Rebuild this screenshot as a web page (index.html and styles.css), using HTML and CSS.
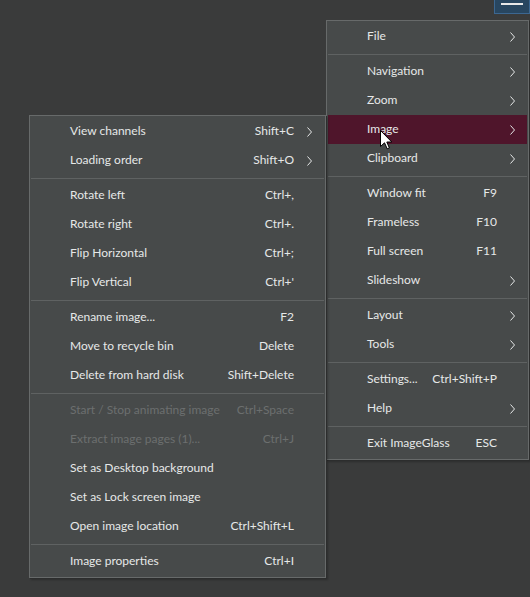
FILE: index.html
```html
<!DOCTYPE html>
<html lang="en">
<head>
<meta charset="utf-8">
<title>ImageGlass menu</title>
<link rel="stylesheet" href="styles.css">
</head>
<body>
<div class="toolbar">
  <button class="tool-btn" aria-label="Main menu"><span class="hamburger"></span></button>
</div>

<div class="menu menu-main">
  <div class="item"><span class="label">File</span><span class="key"></span><span class="arrow"><svg width="6" height="10" viewBox="0 0 6 10"><polyline points="0.5,0.5 4.5,5 0.5,9.5"/></svg></span></div>
  <div class="sep"></div>
  <div class="item"><span class="label">Navigation</span><span class="key"></span><span class="arrow"><svg width="6" height="10" viewBox="0 0 6 10"><polyline points="0.5,0.5 4.5,5 0.5,9.5"/></svg></span></div>
  <div class="item"><span class="label">Zoom</span><span class="key"></span><span class="arrow"><svg width="6" height="10" viewBox="0 0 6 10"><polyline points="0.5,0.5 4.5,5 0.5,9.5"/></svg></span></div>
  <div class="item active"><span class="label">Image</span><span class="key"></span><span class="arrow"><svg width="6" height="10" viewBox="0 0 6 10"><polyline points="0.5,0.5 4.5,5 0.5,9.5"/></svg></span></div>
  <div class="item"><span class="label">Clipboard</span><span class="key"></span><span class="arrow"><svg width="6" height="10" viewBox="0 0 6 10"><polyline points="0.5,0.5 4.5,5 0.5,9.5"/></svg></span></div>
  <div class="sep"></div>
  <div class="item"><span class="label">Window fit</span><span class="key">F9</span><span class="arrow"></span></div>
  <div class="item"><span class="label">Frameless</span><span class="key">F10</span><span class="arrow"></span></div>
  <div class="item"><span class="label">Full screen</span><span class="key">F11</span><span class="arrow"></span></div>
  <div class="item"><span class="label">Slideshow</span><span class="key"></span><span class="arrow"><svg width="6" height="10" viewBox="0 0 6 10"><polyline points="0.5,0.5 4.5,5 0.5,9.5"/></svg></span></div>
  <div class="sep"></div>
  <div class="item"><span class="label">Layout</span><span class="key"></span><span class="arrow"><svg width="6" height="10" viewBox="0 0 6 10"><polyline points="0.5,0.5 4.5,5 0.5,9.5"/></svg></span></div>
  <div class="item"><span class="label">Tools</span><span class="key"></span><span class="arrow"><svg width="6" height="10" viewBox="0 0 6 10"><polyline points="0.5,0.5 4.5,5 0.5,9.5"/></svg></span></div>
  <div class="sep"></div>
  <div class="item"><span class="label">Settings...</span><span class="key">Ctrl+Shift+P</span><span class="arrow"></span></div>
  <div class="item"><span class="label">Help</span><span class="key"></span><span class="arrow"><svg width="6" height="10" viewBox="0 0 6 10"><polyline points="0.5,0.5 4.5,5 0.5,9.5"/></svg></span></div>
  <div class="sep"></div>
  <div class="item"><span class="label">Exit ImageGlass</span><span class="key">ESC</span><span class="arrow"></span></div>
</div>

<div class="menu menu-sub">
  <div class="item"><span class="label">View channels</span><span class="key">Shift+C</span><span class="arrow"><svg width="6" height="10" viewBox="0 0 6 10"><polyline points="0.5,0.5 4.5,5 0.5,9.5"/></svg></span></div>
  <div class="item"><span class="label">Loading order</span><span class="key">Shift+O</span><span class="arrow"><svg width="6" height="10" viewBox="0 0 6 10"><polyline points="0.5,0.5 4.5,5 0.5,9.5"/></svg></span></div>
  <div class="sep"></div>
  <div class="item"><span class="label">Rotate left</span><span class="key">Ctrl+,</span><span class="arrow"></span></div>
  <div class="item"><span class="label">Rotate right</span><span class="key">Ctrl+.</span><span class="arrow"></span></div>
  <div class="item"><span class="label">Flip Horizontal</span><span class="key">Ctrl+;</span><span class="arrow"></span></div>
  <div class="item"><span class="label">Flip Vertical</span><span class="key">Ctrl+'</span><span class="arrow"></span></div>
  <div class="sep"></div>
  <div class="item"><span class="label">Rename image...</span><span class="key">F2</span><span class="arrow"></span></div>
  <div class="item"><span class="label">Move to recycle bin</span><span class="key">Delete</span><span class="arrow"></span></div>
  <div class="item"><span class="label">Delete from hard disk</span><span class="key">Shift+Delete</span><span class="arrow"></span></div>
  <div class="sep"></div>
  <div class="item disabled"><span class="label">Start / Stop animating image</span><span class="key">Ctrl+Space</span><span class="arrow"></span></div>
  <div class="item disabled"><span class="label">Extract image pages (1)...</span><span class="key">Ctrl+J</span><span class="arrow"></span></div>
  <div class="item"><span class="label">Set as Desktop background</span><span class="key"></span><span class="arrow"></span></div>
  <div class="item"><span class="label">Set as Lock screen image</span><span class="key"></span><span class="arrow"></span></div>
  <div class="item"><span class="label">Open image location</span><span class="key">Ctrl+Shift+L</span><span class="arrow"></span></div>
  <div class="sep"></div>
  <div class="item"><span class="label">Image properties</span><span class="key">Ctrl+I</span><span class="arrow"></span></div>
</div>

<svg class="cursor" width="13" height="20" viewBox="0 0 13 20">
  <path d="M0.5,0.5 L0.5,16.5 L4.5,12.8 L7.2,18.8 L9.4,17.9 L6.8,12 L11.8,12 Z" fill="#ffffff" stroke="#000000" stroke-width="1" stroke-linejoin="miter"/>
</svg>
</body>
</html>
```
FILE: styles.css
```css
html, body {
  margin: 0;
  padding: 0;
}
body {
  width: 530px;
  height: 597px;
  background: #3a3b3b;
  font-family: "Lato", "Noto Sans", sans-serif;
  font-size: 12px;
  color: #e6e8e8;
  position: relative;
  overflow: hidden;
}

.toolbar {
  display: flex;
  justify-content: flex-end;
  height: 14px;
}
.tool-btn {
  width: 36px;
  height: 14px;
  margin: 0;
  padding: 0;
  border: 1px solid #3c6791;
  border-top: none;
  background: #284660;
  display: flex;
  justify-content: center;
  align-items: flex-start;
}
.hamburger {
  display: block;
  width: 22px;
  height: 2px;
  margin-top: 3px;
  background: #e8e8e8;
}

.menu {
  position: absolute;
  box-sizing: border-box;
  background: #474a4a;
  border: 1px solid #676a6a;
  padding: 1px;
  box-shadow: 1px 1px 0 #2c2d2d, 2px 2px 2px rgba(0, 0, 0, 0.25);
}
.menu-main {
  left: 326px;
  top: 20px;
  width: 203px;
}
.menu-sub {
  left: 29px;
  top: 115px;
  width: 297px;
}

.item {
  display: grid;
  grid-template-columns: 1fr auto 30px;
  align-items: center;
  height: 29px;
  padding-left: 39px;
  white-space: nowrap;
}
.label,
.key {
  line-height: 27px;
  padding-bottom: 2px;
}
.item.active {
  background: #4f152b;
}
.item.disabled {
  color: #6c6f6f;
}
.key {
  text-align: right;
  padding-left: 12px;
}
.arrow {
  display: flex;
  align-items: center;
  height: 29px;
  padding-left: 13px;
}
.arrow svg {
  display: block;
}
.arrow polyline {
  fill: none;
  stroke: #e6e8e8;
  stroke-width: 1;
}

.sep {
  height: 6px;
  display: flex;
  align-items: center;
}
.sep::before {
  content: "";
  display: block;
  width: 100%;
  height: 1px;
  background: #5f6262;
}

.cursor {
  position: absolute;
  left: 380px;
  top: 130px;
}
```
